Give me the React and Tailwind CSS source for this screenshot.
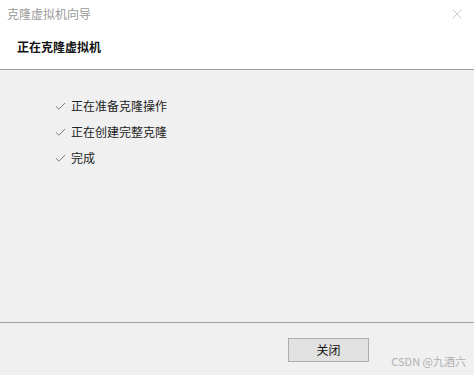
import { Check } from "lucide-react";

const steps = ["正在准备克隆操作", "正在创建完整克隆", "完成"];

export default function App() {
  return (
    <div
      className="w-[474px] h-[375px] flex flex-col bg-white overflow-hidden"
      style={{ fontFamily: '"Microsoft YaHei", "Noto Sans CJK SC", sans-serif' }}
    >
      {/* title bar */}
      <div className="h-[28px] flex items-center justify-between pl-[7px] pr-[12px]">
        <span className="text-[12px] text-[#9a9a9a]">克隆虚拟机向导</span>
        <svg width="10" height="10" viewBox="0 0 10 10" className="text-[#c8c8c8]">
          <path d="M0.5 0.5 L9.5 9.5 M9.5 0.5 L0.5 9.5" stroke="currentColor" strokeWidth="1" />
        </svg>
      </div>

      {/* header */}
      <div className="h-[41px] pl-[17px] pt-[5px]">
        <span className="text-[12px] font-bold text-[#111]">正在克隆虚拟机</span>
      </div>

      {/* body */}
      <div className="flex-1 flex flex-col bg-[#f0f0f0] border-t border-t-[#a0a0a0]">
        <div className="h-[253px] flex flex-col gap-[10px] pl-[54px] pt-[28px] border-b border-b-[#a0a0a0]">
          {steps.map((s) => (
            <div key={s} className="flex items-center gap-[4px] h-[16px]">
              <Check className="w-[13px] h-[13px] text-[#555]" strokeWidth={1.4} />
              <span className="text-[12px] text-[#222]">{s}</span>
            </div>
          ))}
        </div>

        <div className="flex-1 flex items-start justify-end relative pr-[105px] pt-[15px]">
          <button className="w-[81px] h-[24px] bg-[#e1e1e1] border border-[#adadad] text-[12px] text-[#111]">
            关闭
          </button>
          <span className="absolute right-[8px] bottom-[6px] text-[11px] text-[#b0b0b0]">
            CSDN @九酒六
          </span>
        </div>
      </div>
    </div>
  );
}
